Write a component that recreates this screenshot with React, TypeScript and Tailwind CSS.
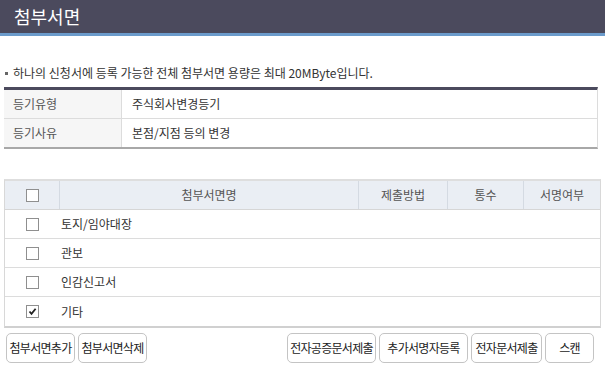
import React, { useState } from 'react';

const font = { fontFamily: '"Noto Sans CJK KR", "Noto Sans", sans-serif' };

const docs = [
  { id: 1, name: '토지/임야대장', checked: false },
  { id: 2, name: '관보', checked: false },
  { id: 3, name: '인감신고서', checked: false },
  { id: 4, name: '기타', checked: true },
];

const Box: React.FC<{ on: boolean; onClick?: () => void }> = ({ on, onClick }) => (
  <span
    onClick={onClick}
    className="w-[13px] h-[13px] border border-[#8f8f8f] bg-white flex items-center justify-center cursor-pointer"
  >
    {on && (
      <svg width="9" height="9" viewBox="0 0 9 9">
        <path d="M1.5 4.5 L3.5 6.8 L7.6 1.8" stroke="#222" strokeWidth="1.8" fill="none" />
      </svg>
    )}
  </span>
);

const Btn: React.FC<{ label: string; w: string }> = ({ label, w }) => (
  <button className={`${w} h-[30px] px-0 border border-[#c4c4c4] rounded-[5px] bg-white text-[12px] tracking-[-0.7px] whitespace-nowrap text-[#222] leading-none`}>
    {label}
  </button>
);

const App: React.FC = () => {
  const [rows, setRows] = useState(docs);
  const toggle = (id: number) => setRows(rs => rs.map(r => (r.id === id ? { ...r, checked: !r.checked } : r)));

  return (
    <div className="w-[605px] h-[378px] bg-white overflow-hidden" style={font}>
      <div className="h-[36px] bg-[#4b4a5d] border-b-[3px] border-[#6b9bcb] flex items-center pl-[14px]">
        <h1 className="text-white text-[18px] leading-none pb-[2px]">첨부서면</h1>
      </div>

      <div className="mt-[29px] h-[16px] flex items-center pl-[5px] text-[12px] text-[#333]">
        <span className="w-[3px] h-[3px] bg-[#666] mr-[5px]" />
        하나의 신청서에 등록 가능한 전체 첨부서면 용량은 최대 20MByte입니다.
      </div>

      <div className="mt-[6px] ml-[4px] w-[594px] border-t-[3px] border-[#4b4a5d] border-b-[2px] border-b-[#a8a8a8] border-r border-r-[#dcdcdc] text-[12px] text-[#333]">
        <div className="flex h-[29px] border-b border-[#dcdcdc]">
          <div className="w-[118px] bg-[#f6f6f6] border-r border-[#dcdcdc] flex items-center pl-[9px] text-[#555]">등기유형</div>
          <div className="flex-1 flex items-center pl-[10px]">주식회사변경등기</div>
        </div>
        <div className="flex h-[28px]">
          <div className="w-[118px] bg-[#f6f6f6] border-r border-[#dcdcdc] flex items-center pl-[9px] text-[#555]">등기사유</div>
          <div className="flex-1 flex items-center pl-[10px]">본점/지점 등의 변경</div>
        </div>
      </div>

      <div className="mt-[30px] ml-[4px] w-[597px] border-t-[2px] border-[#dedede] border-l border-l-[#d8d8d8] border-r border-r-[#d8d8d8] border-b-[2px] border-b-[#d0d0d0] text-[12px]">
        <div className="flex h-[29px] bg-[#eaeef4] text-[#555] border-b border-[#d6d6d6]">
          <div className="w-[55px] border-r border-[#d4dae2] flex items-center justify-center">
            <Box on={false} />
          </div>
          <div className="w-[299px] border-r border-[#d4dae2] flex items-center justify-center">첨부서면명</div>
          <div className="w-[89px] border-r border-[#d4dae2] flex items-center justify-center">제출방법</div>
          <div className="w-[76px] border-r border-[#d4dae2] flex items-center justify-center">통수</div>
          <div className="flex-1 flex items-center justify-center">서명여부</div>
        </div>
        {rows.map((r, i) => (
          <div key={r.id} className={`flex h-[29px] text-[#333] ${i < rows.length - 1 ? 'border-b border-[#dcdcdc]' : ''}`}>
            <div className="w-[55px] flex items-center justify-center">
              <Box on={r.checked} onClick={() => toggle(r.id)} />
            </div>
            <div className="flex-1 flex items-center pl-[1px]">{r.name}</div>
          </div>
        ))}
      </div>

      <div className="mt-[5px] flex px-[6px]">
        <div className="flex gap-[3px]">
          <Btn label="첨부서면추가" w="w-[69px]" />
          <Btn label="첨부서면삭제" w="w-[69px]" />
        </div>
        <div className="ml-auto mr-[5px] flex gap-[3px]">
          <Btn label="전자공증문서제출" w="w-[89px]" />
          <Btn label="추가서명자등록" w="w-[89px]" />
          <Btn label="전자문서제출" w="w-[71px]" />
          <Btn label="스캔" w="w-[49px]" />
        </div>
      </div>
    </div>
  );
};

export default App;
